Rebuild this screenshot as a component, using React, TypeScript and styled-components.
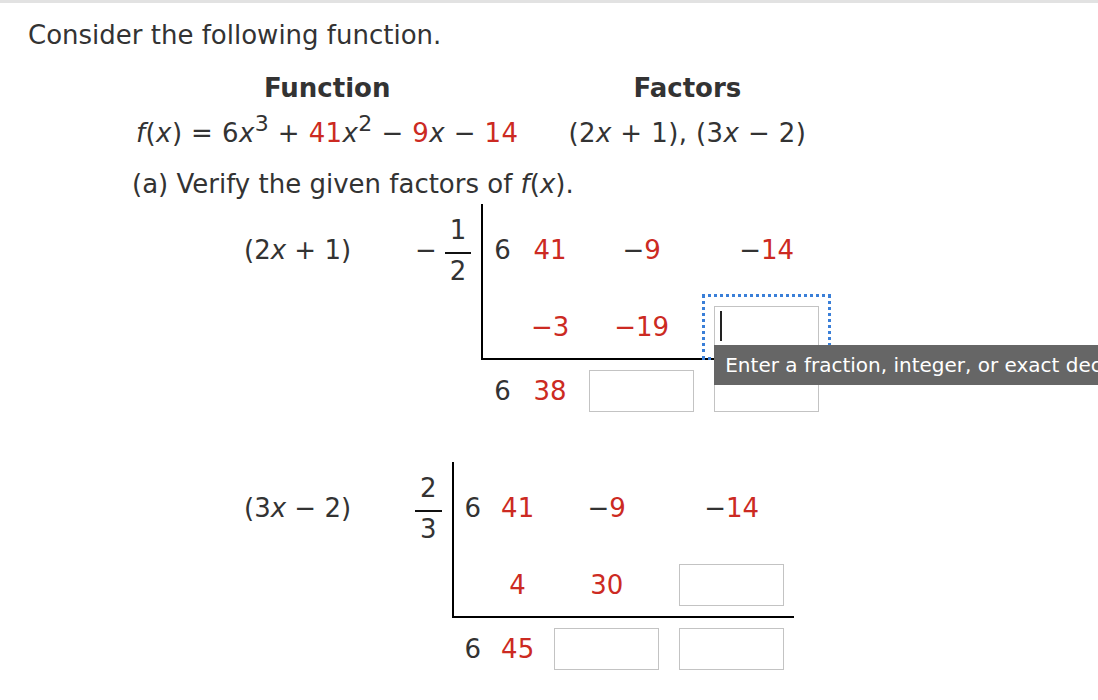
import styled, { createGlobalStyle } from "styled-components";

const GlobalStyle = createGlobalStyle`
  html, body {
    margin: 0;
    padding: 0;
    background: #fff;
    overflow: hidden;
  }
  body {
    font-family: "DejaVu Sans", Verdana, sans-serif;
    color: #333;
  }
`;

const RED = "#cc2a22";

const Page = styled.div`
  box-sizing: border-box;
  height: 700px;
  border-top: 3px solid #e2e2e2;
  padding: 17px 0 0 28px;
  font-size: 26px;
  line-height: 30px;
`;

const Intro = styled.p`
  margin: 0;
`;

const FunctionTable = styled.div`
  display: grid;
  grid-template-columns: auto auto;
  justify-content: start;
  column-gap: 50px;
  row-gap: 15px;
  margin: 23px 0 0 108px;
  text-align: center;
`;

const HeadCell = styled.div`
  font-weight: bold;
`;

const Cell = styled.div`
  white-space: nowrap;
  letter-spacing: 0.4px;
`;

const Var = styled.i`
  font-style: italic;
`;

const Sup = styled.sup`
  font-size: 22px;
  line-height: 0;
  vertical-align: 11px;
`;

const Red = styled.span`
  color: ${RED};
`;

const PartTitle = styled.p`
  margin: 21px 0 0 104px;
`;

const Division = styled.div<{ $top: number }>`
  display: flex;
  align-items: flex-start;
  margin: ${(p) => p.$top}px 0 0 216px;
`;

const FactorLabel = styled.div`
  width: 171px;
  height: 92px;
  display: flex;
  align-items: center;
  white-space: nowrap;
`;

const Divisor = styled.div`
  height: 92px;
  display: flex;
  align-items: center;
  margin-right: 10px;
`;

const Minus = styled.span`
  margin-right: 8px;
`;

const Fraction = styled.span`
  display: inline-flex;
  flex-direction: column;
  text-align: center;
`;

const Numerator = styled.span`
  line-height: 26px;
  padding: 0 5px 9px;
`;

const Denominator = styled.span`
  line-height: 26px;
  padding: 4px 5px 0;
  border-top: 2px solid #111;
`;

const Synthetic = styled.table`
  border-collapse: separate;
  border-spacing: 0;
`;

const Row = styled.tr<{ $h: number }>`
  height: ${(p) => p.$h}px;
`;

const Td = styled.td<{ $edge?: boolean; $first?: boolean; $rule?: boolean }>`
  padding: 0 10px;
  padding-left: ${(p) => (p.$first ? (p.$edge ? 11 : 13) : 10)}px;
  border-left: ${(p) => (p.$edge ? "2px solid #000" : "none")};
  border-bottom: ${(p) => (p.$rule ? "2px solid #000" : "none")};
  text-align: center;
  vertical-align: middle;
  white-space: nowrap;
`;

const Slot = styled.div`
  position: relative;
`;

const AnswerBox = styled.div<{ $focused?: boolean }>`
  box-sizing: border-box;
  width: 105px;
  height: 42px;
  margin: 0 auto;
  padding: 4px 0 0 5px;
  border: 1px solid #c3c3c3;
  background: #fff;
  outline: ${(p) => (p.$focused ? "3px dotted #3a7fd8" : "none")};
  outline-offset: 9px;
`;

const Caret = styled.span`
  display: block;
  width: 2px;
  height: 30px;
  background: #222;
`;

const Tooltip = styled.div`
  position: absolute;
  left: 0;
  top: 39px;
  z-index: 2;
  padding: 0 40px 0 11px;
  background: #666;
  color: #fff;
  font-size: 20px;
  line-height: 40px;
  white-space: nowrap;
`;

type Entry =
  | { kind: "empty" }
  | { kind: "num"; value: string; red?: boolean; neg?: "dark" | "red" }
  | { kind: "box"; focused?: boolean; tip?: string };

const Num = ({ value, red, neg }: { value: string; red?: boolean; neg?: "dark" | "red" }) => (
  <>
    {neg === "dark" && "−"}
    {neg === "red" && <Red>−</Red>}
    {red ? <Red>{value}</Red> : value}
  </>
);

const renderEntry = (e: Entry) => {
  if (e.kind === "empty") return null;
  if (e.kind === "num") return <Num value={e.value} red={e.red} neg={e.neg} />;
  return (
    <Slot>
      <AnswerBox $focused={e.focused}>{e.focused && <Caret />}</AnswerBox>
      {e.tip && <Tooltip>{e.tip}</Tooltip>}
    </Slot>
  );
};

type DivisionData = {
  label: React.ReactNode;
  negative: boolean;
  num: string;
  den: string;
  top: number;
  rows: Entry[][];
};

const divisions: DivisionData[] = [
  {
    label: (
      <span>
        (2<Var>x</Var> + 1)
      </span>
    ),
    negative: true,
    num: "1",
    den: "2",
    top: 5,
    rows: [
      [
        { kind: "num", value: "6" },
        { kind: "num", value: "41", red: true },
        { kind: "num", value: "9", red: true, neg: "dark" },
        { kind: "num", value: "14", red: true, neg: "dark" },
      ],
      [
        { kind: "empty" },
        { kind: "num", value: "3", red: true, neg: "red" },
        { kind: "num", value: "19", red: true, neg: "red" },
        { kind: "box", focused: true, tip: "Enter a fraction, integer, or exact decimal." },
      ],
      [
        { kind: "num", value: "6" },
        { kind: "num", value: "38", red: true },
        { kind: "box" },
        { kind: "box" },
      ],
    ],
  },
  {
    label: (
      <span>
        (3<Var>x</Var> − 2)
      </span>
    ),
    negative: false,
    num: "2",
    den: "3",
    top: 40,
    rows: [
      [
        { kind: "num", value: "6" },
        { kind: "num", value: "41", red: true },
        { kind: "num", value: "9", red: true, neg: "dark" },
        { kind: "num", value: "14", red: true, neg: "dark" },
      ],
      [
        { kind: "empty" },
        { kind: "num", value: "4", red: true },
        { kind: "num", value: "30", red: true },
        { kind: "box" },
      ],
      [
        { kind: "num", value: "6" },
        { kind: "num", value: "45", red: true },
        { kind: "box" },
        { kind: "box" },
      ],
    ],
  },
];

const rowHeights = [92, 64, 62];

const SyntheticDivision = ({ data }: { data: DivisionData }) => (
  <Division $top={data.top}>
    <FactorLabel>{data.label}</FactorLabel>
    <Divisor>
      {data.negative && <Minus>−</Minus>}
      <Fraction>
        <Numerator>{data.num}</Numerator>
        <Denominator>{data.den}</Denominator>
      </Fraction>
    </Divisor>
    <Synthetic>
      <tbody>
        {data.rows.map((row, r) => (
          <Row key={r} $h={rowHeights[r]}>
            {row.map((entry, c) => (
              <Td key={c} $first={c === 0} $edge={c === 0 && r < 2} $rule={r === 1}>
                {renderEntry(entry)}
              </Td>
            ))}
          </Row>
        ))}
      </tbody>
    </Synthetic>
  </Division>
);

export default function App() {
  return (
    <>
      <GlobalStyle />
      <Page>
        <Intro>Consider the following function.</Intro>
        <FunctionTable>
          <HeadCell>Function</HeadCell>
          <HeadCell>Factors</HeadCell>
          <Cell>
            <Var>f</Var>(<Var>x</Var>) = 6<Var>x</Var>
            <Sup>3</Sup> + <Red>41</Red>
            <Var>x</Var>
            <Sup>2</Sup> − <Red>9</Red>
            <Var>x</Var> − <Red>14</Red>
          </Cell>
          <Cell>
            (2<Var>x</Var> + 1), (3<Var>x</Var> − 2)
          </Cell>
        </FunctionTable>
        <PartTitle>
          (a) Verify the given factors of <Var>f</Var>(<Var>x</Var>).
        </PartTitle>
        {divisions.map((d, i) => (
          <SyntheticDivision key={i} data={d} />
        ))}
      </Page>
    </>
  );
}
